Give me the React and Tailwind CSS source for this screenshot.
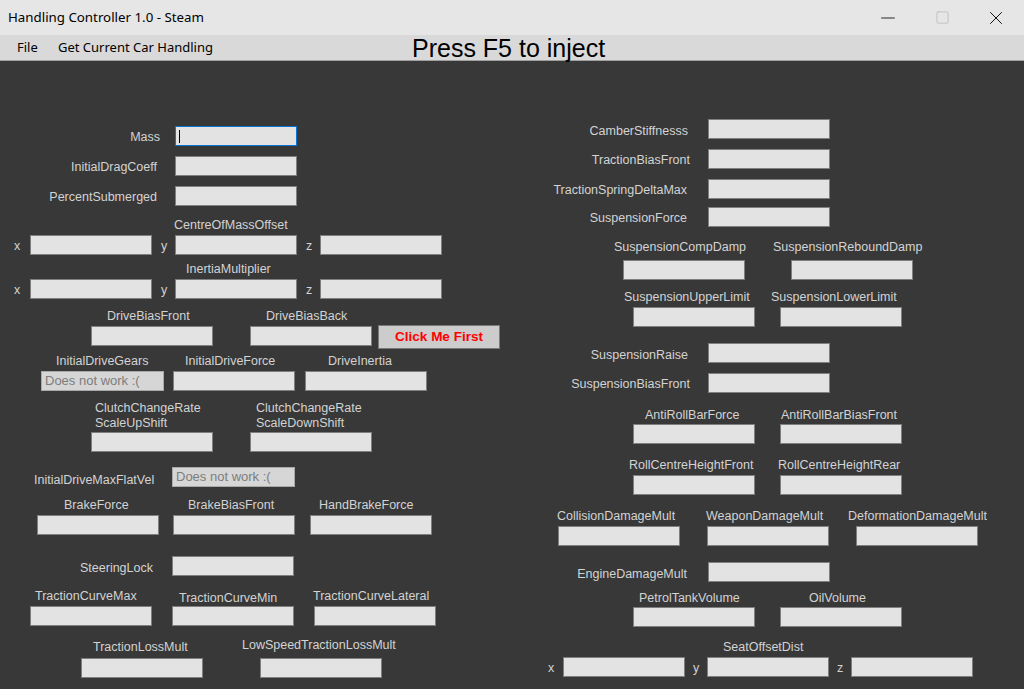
import { Minus, Square, X } from 'lucide-react'

function Box({ className = '', disabled, focused, text }) {
  if (disabled) {
    return (
      <div className={'flex h-[20px] w-[123px] shrink-0 items-center border border-[#a9a9a9] bg-[#d6d6d6] px-[3px] text-[13px] text-[#7d7d7d] ' + className}>
        {text}
      </div>
    )
  }
  return (
    <div
      className={
        'flex h-[20px] w-[122px] shrink-0 items-center border bg-[#e3e3e3] px-[3px] ' +
        (focused ? 'border-[#0a74d4] ' : 'border-[#7f7f7f] ') +
        className
      }
    >
      {focused ? <span className="h-[13px] w-px bg-black" /> : null}
    </div>
  )
}

function L({ className = '', children }) {
  return <div className={'shrink-0 translate-y-[1px] whitespace-nowrap leading-[14px] ' + className}>{children}</div>
}

function LeftColumn() {
  return (
    <div className="flex w-[540px] shrink-0 flex-col">
      <div className="mt-[65px] flex h-[20px] items-center">
        <L className="w-[160px] text-right">Mass</L>
        <Box className="ml-[15px]" focused />
      </div>
      <div className="mt-[10px] flex h-[20px] items-center">
        <L className="w-[157px] text-right">InitialDragCoeff</L>
        <Box className="ml-[18px]" />
      </div>
      <div className="mt-[10px] flex h-[20px] items-center">
        <L className="w-[157px] text-right">PercentSubmerged</L>
        <Box className="ml-[18px]" />
      </div>

      <div className="mt-[11px] flex">
        <L className="ml-[174px]">CentreOfMassOffset</L>
      </div>
      <div className="mt-[4px] flex h-[20px] items-center">
        <L className="ml-[14px] w-[16px]">x</L>
        <Box />
        <L className="ml-[9px] w-[14px]">y</L>
        <Box />
        <L className="ml-[9px] w-[14px]">z</L>
        <Box />
      </div>

      <div className="mt-[6px] flex">
        <L className="ml-[186px]">InertiaMultiplier</L>
      </div>
      <div className="mt-[4px] flex h-[20px] items-center">
        <L className="ml-[14px] w-[16px]">x</L>
        <Box />
        <L className="ml-[9px] w-[14px]">y</L>
        <Box />
        <L className="ml-[9px] w-[14px]">z</L>
        <Box />
      </div>

      <div className="mt-[9px] flex">
        <L className="ml-[107px] w-[159px]">DriveBiasFront</L>
        <L className="w-[100px]">DriveBiasBack</L>
      </div>
      <div className="mt-[3px] flex items-start">
        <Box className="ml-[91px] mt-[1px]" />
        <Box className="ml-[37px] mt-[1px]" />
        <button className="ml-[6px] h-[24px] w-[122px] border border-[#7a7a7a] bg-[#cccccc] font-bold text-[13.5px] text-[#ff0000]">
          Click Me First
        </button>
      </div>

      <div className="mt-[4px] flex">
        <L className="ml-[56px] w-[129px]">InitialDriveGears</L>
        <L className="w-[143px]">InitialDriveForce</L>
        <L className="w-[80px]">DriveInertia</L>
      </div>
      <div className="mt-[4px] flex">
        <Box className="ml-[41px]" disabled text="Does not work :(" />
        <Box className="ml-[9px]" />
        <Box className="ml-[10px]" />
      </div>

      <div className="mt-[9px] flex translate-y-[1px] leading-[15px]">
        <div className="ml-[95px] w-[161px] shrink-0 whitespace-nowrap">
          ClutchChangeRate<br />ScaleUpShift
        </div>
        <div className="w-[130px] shrink-0 whitespace-nowrap">
          ClutchChangeRate<br />ScaleDownShift
        </div>
      </div>
      <div className="mt-[2px] flex">
        <Box className="ml-[91px]" />
        <Box className="ml-[37px]" />
      </div>

      <div className="mt-[15px] flex items-start">
        <L className="ml-[34px] w-[138px] pt-[5px]">InitialDriveMaxFlatVel</L>
        <Box disabled text="Does not work :(" />
      </div>

      <div className="mt-[10px] flex">
        <L className="ml-[64px] w-[124px]">BrakeForce</L>
        <L className="w-[131px]">BrakeBiasFront</L>
        <L className="w-[100px]">HandBrakeForce</L>
      </div>
      <div className="mt-[4px] flex">
        <Box className="ml-[37px]" />
        <Box className="ml-[14px]" />
        <Box className="ml-[15px]" />
      </div>

      <div className="mt-[21px] flex items-start">
        <L className="ml-[80px] w-[92px] pt-[4px]">SteeringLock</L>
        <Box />
      </div>

      <div className="mt-[12px] flex items-start">
        <L className="ml-[35px] w-[144px]">TractionCurveMax</L>
        <L className="w-[134px] pt-[2px]">TractionCurveMin</L>
        <L className="w-[120px]">TractionCurveLateral</L>
      </div>
      <div className="mt-[2px] flex">
        <Box className="ml-[30px]" />
        <Box className="ml-[20px]" />
        <Box className="ml-[20px]" />
      </div>

      <div className="mt-[11px] flex items-start">
        <L className="ml-[93px] w-[149px] pt-[2px]">TractionLossMult</L>
        <L className="w-[170px]">LowSpeedTractionLossMult</L>
      </div>
      <div className="mt-[5px] flex">
        <Box className="ml-[81px]" />
        <Box className="ml-[57px]" />
      </div>
    </div>
  )
}

function RightColumn() {
  return (
    <div className="flex flex-1 flex-col">
      <div className="mt-[58px] flex h-[20px] items-center">
        <L className="w-[148px] pt-[2px] text-right">CamberStiffnesss</L>
        <Box className="ml-[20px]" />
      </div>
      <div className="mt-[10px] flex h-[20px] items-center">
        <L className="w-[150px] text-right">TractionBiasFront</L>
        <Box className="ml-[18px]" />
      </div>
      <div className="mt-[10px] flex h-[20px] items-center">
        <L className="w-[147px] text-right">TractionSpringDeltaMax</L>
        <Box className="ml-[21px]" />
      </div>
      <div className="mt-[8px] flex h-[20px] items-center">
        <L className="w-[147px] text-right">SuspensionForce</L>
        <Box className="ml-[21px]" />
      </div>

      <div className="mt-[12px] flex">
        <L className="ml-[74px] w-[159px]">SuspensionCompDamp</L>
        <L className="w-[160px]">SuspensionReboundDamp</L>
      </div>
      <div className="mt-[7px] flex">
        <Box className="ml-[83px]" />
        <Box className="ml-[46px]" />
      </div>

      <div className="mt-[9px] flex">
        <L className="ml-[84px] w-[147px]">SuspensionUpperLimit</L>
        <L className="w-[140px]">SuspensionLowerLimit</L>
      </div>
      <div className="mt-[4px] flex">
        <Box className="ml-[93px]" />
        <Box className="ml-[25px]" />
      </div>

      <div className="mt-[16px] flex h-[20px] items-center">
        <L className="w-[148px] pt-[2px] text-right">SuspensionRaise</L>
        <Box className="ml-[20px]" />
      </div>
      <div className="mt-[10px] flex h-[20px] items-center">
        <L className="w-[150px] text-right">SuspensionBiasFront</L>
        <Box className="ml-[18px]" />
      </div>

      <div className="mt-[14px] flex">
        <L className="ml-[105px] w-[136px]">AntiRollBarForce</L>
        <L className="w-[130px]">AntiRollBarBiasFront</L>
      </div>
      <div className="mt-[3px] flex">
        <Box className="ml-[93px]" />
        <Box className="ml-[25px]" />
      </div>

      <div className="mt-[13px] flex">
        <L className="ml-[89px] w-[149px]">RollCentreHeightFront</L>
        <L className="w-[130px]">RollCentreHeightRear</L>
      </div>
      <div className="mt-[4px] flex">
        <Box className="ml-[93px]" />
        <Box className="ml-[25px]" />
      </div>

      <div className="mt-[13px] flex">
        <L className="ml-[17px] w-[149px]">CollisionDamageMult</L>
        <L className="w-[142px]">WeaponDamageMult</L>
        <L className="w-[150px]">DeformationDamageMult</L>
      </div>
      <div className="mt-[4px] flex">
        <Box className="ml-[18px]" />
        <Box className="ml-[27px]" />
        <Box className="ml-[27px]" />
      </div>

      <div className="mt-[16px] flex h-[20px] items-center">
        <L className="w-[147px] pt-[2px] text-right">EngineDamageMult</L>
        <Box className="ml-[21px]" />
      </div>

      <div className="mt-[8px] flex">
        <L className="ml-[99px] w-[170px]">PetrolTankVolume</L>
        <L className="w-[80px]">OilVolume</L>
      </div>
      <div className="mt-[3px] flex">
        <Box className="ml-[93px]" />
        <Box className="ml-[25px]" />
      </div>

      <div className="mt-[12px] flex">
        <L className="ml-[183px]">SeatOffsetDist</L>
      </div>
      <div className="mt-[4px] flex h-[20px] items-center">
        <L className="ml-[8px] w-[15px]">x</L>
        <Box />
        <L className="ml-[8px] w-[14px]">y</L>
        <Box />
        <L className="ml-[8px] w-[14px]">z</L>
        <Box />
      </div>
    </div>
  )
}

export default function App() {
  return (
    <div className="flex h-[689px] w-[1024px] flex-col overflow-hidden bg-[#383838] font-['Liberation_Sans',Arial,sans-serif]">
      {/* title bar */}
      <div className="flex h-[35px] shrink-0 items-center bg-[#e6e6e6] text-black">
        <span className="ml-[8px] font-['Noto_Sans',sans-serif] text-[13.3px]">Handling Controller 1.0 - Steam</span>
        <div className="ml-auto mr-[1px] flex h-full">
          <div className="flex w-[54px] items-center justify-center">
            <Minus size={22} strokeWidth={0.9} />
          </div>
          <div className="flex w-[54px] items-center justify-center text-[#b5b5b5]">
            <Square size={15} strokeWidth={1.2} />
          </div>
          <div className="flex w-[54px] items-center justify-center">
            <X size={22} strokeWidth={1} />
          </div>
        </div>
      </div>

      {/* menu strip */}
      <div className="flex h-[26px] shrink-0 items-center border-b border-[#a0a0a0] bg-[#d9d9d9] font-['Noto_Sans',sans-serif] text-[13px] text-black">
        <span className="ml-[17px] w-[41px]">File</span>
        <span className="w-[354px] whitespace-nowrap">Get Current Car Handling</span>
        <span className="font-['Liberation_Sans',Arial,sans-serif] text-[25px] leading-[24px]">Press F5 to inject</span>
      </div>

      {/* form body */}
      <div className="flex min-h-0 flex-1 text-[12.5px] text-[#d3d3d3]">
        <LeftColumn />
        <RightColumn />
      </div>
    </div>
  )
}
